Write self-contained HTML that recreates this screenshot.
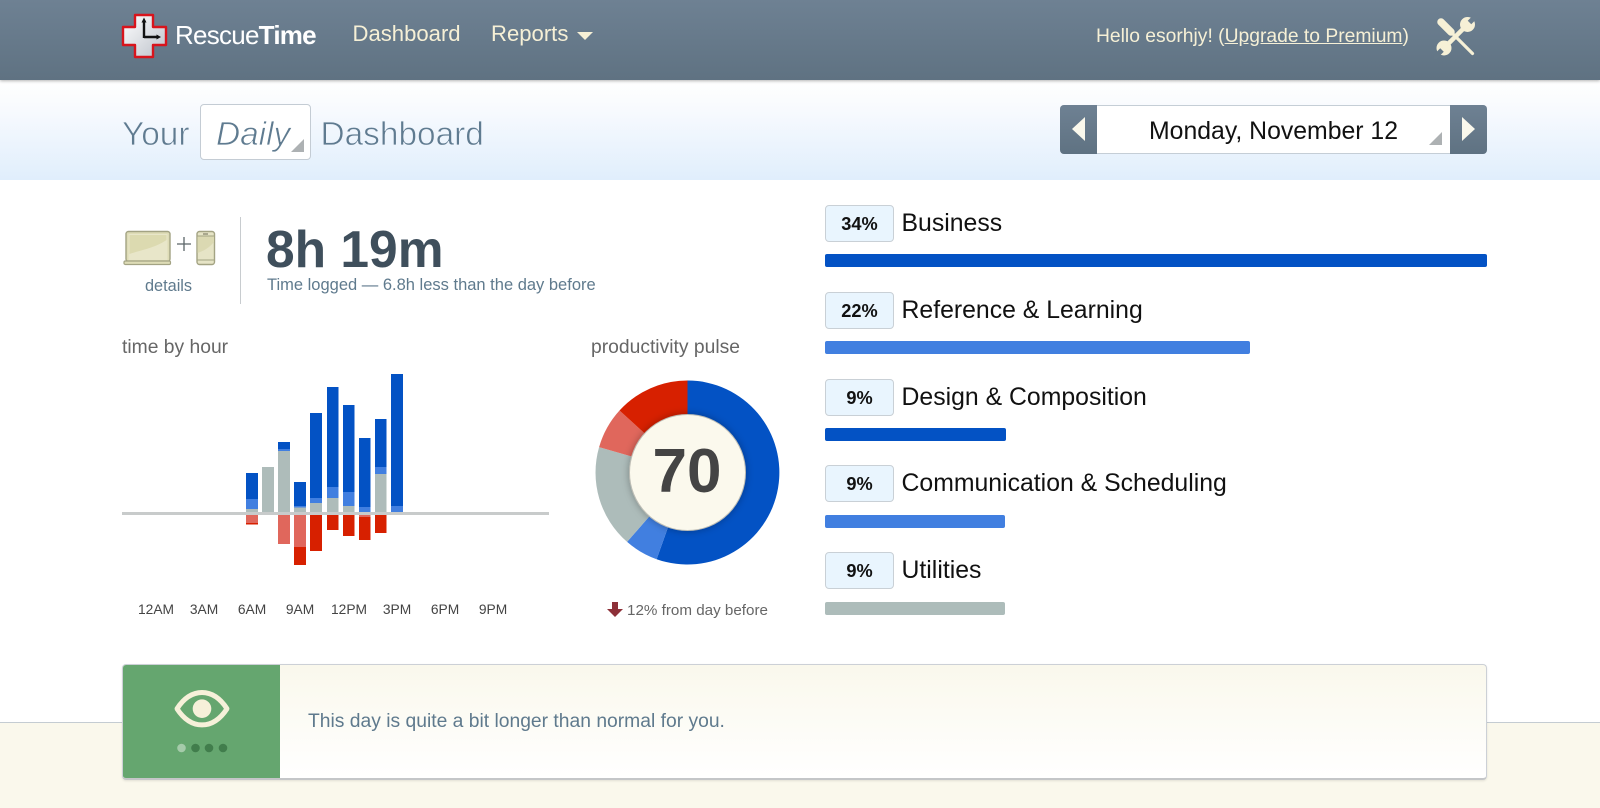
<!DOCTYPE html>
<html><head><meta charset="utf-8"><title>RescueTime Dashboard</title>
<style>
html,body{margin:0;padding:0}
body{width:1600px;height:808px;position:relative;overflow:hidden;background:#faf8ec;font-family:"Liberation Sans",sans-serif}
.a{position:absolute;white-space:nowrap}
.hdr{left:0;top:0;width:1600px;height:80px;background:linear-gradient(#6e8193,#5f7282);box-shadow:0 1px 3px rgba(0,0,0,.3);z-index:3}
.sub{left:0;top:80px;width:1600px;height:100px;background:linear-gradient(#fff 0,#f9fbfe 25%,#e0eefc 100%)}
.main{left:0;top:180px;width:1600px;height:542px;background:#fff;border-bottom:1px solid #c4ccd2}
.nav{color:#f6f0d6;font-size:22.1px;line-height:26px;top:21px}
.h1{font-size:33.4px;line-height:40px;top:115px;color:#5f7b90;-webkit-text-stroke:.7px #eff5fd}
.pct{left:825px;width:67px;height:35px;background:#e9f5fe;border:1px solid #c9d0d6;border-radius:4px;text-align:center;font-weight:bold;font-size:18.2px;line-height:36.5px;color:#111}
.cat{left:901.5px;font-size:24.8px;line-height:30px;color:#111}
.bar{left:825px;height:13px;border-radius:2px}
.hr{top:601px;font-size:13.8px;line-height:18px;color:#444;transform:translateX(-50%)}
</style></head><body>
<div class="a main"></div>
<div class="a sub"></div>
<div class="a hdr"></div>

<div class="a" style="left:0;top:0;z-index:4;width:1600px;height:80px">
<svg class="a" style="left:120px;top:12px" width="50" height="48" viewBox="0 0 50 48">
<defs><linearGradient id="lg" x1="0" y1="0" x2="1" y2="1"><stop offset="0" stop-color="#fff"/><stop offset="1" stop-color="#bcc1ca"/></linearGradient></defs>
<path d="M15 3H33V15H46V33H33V45H15V33H3V15H15Z" fill="url(#lg)" stroke="#d8141c" stroke-width="2.400" stroke-linejoin="round"/>
<path d="M24 9V26M24 25H38" stroke="#111" stroke-width="2.400" fill="none"/>
<path d="M24 5.500l-2.500 5h5zM41 25l-4.500-2.500v5z" fill="#111"/>
</svg>
<div class="a" style="left:175px;top:20px;font-size:26px;line-height:30px;letter-spacing:-.75px;color:#fff">Rescue<b>Time</b></div>
<div class="a nav" style="left:352.500px">Dashboard</div>
<div class="a nav" style="left:491px">Reports</div>
<div class="a" style="left:577px;top:32px;width:0;height:0;border-left:8px solid transparent;border-right:8px solid transparent;border-top:8px solid #f6f0d6"></div>
<div class="a" style="left:1096px;top:25.500px;font-size:19.300px;line-height:22px;color:#f6f0d6">Hello esorhjy! (<u>Upgrade to Premium</u>)</div>
<svg class="a" style="left:1434px;top:15px" width="44" height="44" viewBox="0 0 44 44">
<path d="M7 7L17 17" stroke="#f6f0d6" stroke-width="7.500" stroke-linecap="round"/>
<path d="M17 17L38.500 38.500" stroke="#f6f0d6" stroke-width="3.200" stroke-linecap="round"/>
<path d="M10 33L34 9" stroke="#f6f0d6" stroke-width="4.500"/>
<circle cx="33.500" cy="9.500" r="7.500" fill="#f6f0d6"/><circle cx="10" cy="33" r="7.500" fill="#f6f0d6"/>
<path d="M35.500 7.500L44 -1" stroke="#6b7e8f" stroke-width="5"/>
<path d="M8 35L-1 44" stroke="#647787" stroke-width="5"/>
</svg>
</div>

<div class="a h1" style="left:122px">Your</div>
<div class="a" style="left:200px;top:104px;width:109px;height:54px;background:#fff;border:1px solid #c4ccd4;border-radius:4px"></div>
<div class="a h1" style="left:216px;font-style:italic;-webkit-text-stroke-color:#fff">Daily</div>
<div class="a" style="left:291px;top:139px;width:0;height:0;border-left:13px solid transparent;border-bottom:13px solid #adb1b3"></div>
<div class="a h1" style="left:320.500px">Dashboard</div>

<div class="a" style="left:1060px;top:105px;width:427px;height:47px;background:#fff;border-radius:4px;border-top:1px solid #c5ced6;border-bottom:1px solid #c5ced6"></div>
<div class="a" style="left:1060px;top:105px;width:37px;height:49px;background:linear-gradient(#6e8193,#5f7282);border-radius:4px 0 0 4px"></div>
<div class="a" style="left:1450px;top:105px;width:37px;height:49px;background:linear-gradient(#6e8193,#5f7282);border-radius:0 4px 4px 0"></div>
<div class="a" style="left:1072px;top:117px;width:0;height:0;border-top:12.500px solid transparent;border-bottom:12.500px solid transparent;border-right:13px solid #faf8ec"></div>
<div class="a" style="left:1462px;top:117px;width:0;height:0;border-top:12.500px solid transparent;border-bottom:12.500px solid transparent;border-left:13px solid #faf8ec"></div>
<div class="a" style="left:1149px;top:116.500px;font-size:24.800px;line-height:30px;color:#111">Monday, November 12</div>
<div class="a" style="left:1429px;top:132px;width:0;height:0;border-left:13px solid transparent;border-bottom:13px solid #adb1b3"></div>

<svg class="a" style="left:122.500px;top:228px" width="96" height="40" viewBox="0 0 96 40">
<rect x="3" y="3.500" width="44" height="30" rx="2.500" fill="#dedcb6" stroke="#a3a383" stroke-width="1.400"/>
<rect x="5.500" y="6" width="39" height="26" fill="#e8e6c9"/>
<path d="M6.500 7H43.500V12C32 20 18 22 6.500 26Z" fill="#dcdab0"/>
<rect x="1" y="33" width="46.500" height="3.500" rx="1.300" fill="#dedcb6" stroke="#a3a383" stroke-width="1.200"/>
<rect x="74" y="3.500" width="17.500" height="33" rx="2.500" fill="#e6e4c6" stroke="#a3a383" stroke-width="1.400"/>
<path d="M74.500 8H91V14C85 21 80 23 74.500 25Z" fill="#dbd9b2"/>
<path d="M74.500 8H91M74.500 32H91" stroke="#a3a383" stroke-width="1"/>
<path d="M80 6H85" stroke="#6d6d55" stroke-width="1"/>
<path d="M54 16H68M61 9V23" stroke="#5b6568" stroke-width="1.300"/>
</svg>
<div class="a" style="left:145px;top:276.500px;font-size:16.300px;line-height:18px;color:#5f7a8d">details</div>
<div class="a" style="left:240px;top:217px;width:1px;height:87px;background:#c8cccf"></div>
<div class="a" style="left:266px;top:219px;font-size:51.500px;line-height:60px;font-weight:bold;color:#3f4f5c">8h 19m</div>
<div class="a" style="left:267px;top:275.500px;font-size:16.500px;line-height:18px;color:#5f7a8d">Time logged — 6.8h less than the day before</div>

<div class="a" style="left:122px;top:337px;font-size:19.300px;line-height:22px;color:#666">time by hour</div>
<div class="a" style="left:591px;top:337px;font-size:19.300px;line-height:22px;color:#666">productivity pulse</div>

<svg class="a" style="left:0;top:360px" width="560" height="220" viewBox="0 360 560 220">
<g fill="#0352c4">
<rect x="246" y="473" width="12" height="26"/><rect x="278" y="442" width="12" height="7"/><rect x="294" y="482" width="12" height="24"/><rect x="310" y="413" width="12" height="85"/><rect x="327" y="387" width="11.500" height="100"/><rect x="343" y="405" width="11.500" height="87"/><rect x="359" y="438" width="11.500" height="69"/><rect x="375" y="419" width="11.500" height="48"/><rect x="391" y="374" width="12" height="132"/>
</g>
<g fill="#417fe0">
<rect x="246" y="499" width="12" height="10"/><rect x="278" y="449" width="12" height="2"/><rect x="294" y="506" width="12" height="1.500"/><rect x="310" y="498" width="12" height="5"/><rect x="327" y="487" width="11.500" height="11"/><rect x="343" y="492" width="11.500" height="14"/><rect x="359" y="507" width="11.500" height="5"/><rect x="375" y="467" width="11.500" height="7"/><rect x="391" y="506" width="12" height="6"/>
</g>
<g fill="#aebcba">
<rect x="246" y="509" width="12" height="3"/><rect x="262" y="467" width="12" height="45"/><rect x="278" y="451" width="12" height="61"/><rect x="294" y="507.500" width="12" height="4.500"/><rect x="310" y="503" width="12" height="9"/><rect x="327" y="498" width="11.500" height="14"/><rect x="343" y="506" width="11.500" height="6"/><rect x="375" y="474" width="11.500" height="38"/>
</g>
<g fill="#e0675c">
<rect x="246" y="515" width="12" height="8"/><rect x="278" y="515" width="12" height="29"/><rect x="294" y="515" width="12" height="32"/><rect x="359" y="515" width="11.500" height="2"/>
</g>
<g fill="#d72000">
<rect x="246" y="523" width="12" height="1.500"/><rect x="294" y="547" width="12" height="18"/><rect x="310" y="515" width="12" height="36"/><rect x="327" y="515" width="11.500" height="15"/><rect x="343" y="515" width="11.500" height="21"/><rect x="359" y="517" width="11.500" height="23"/><rect x="375" y="515" width="11.500" height="18"/>
</g>
<rect x="122" y="512" width="427" height="3" fill="#c8cbcb"/>
</svg>
<div class="a hr" style="left:156px">12AM</div>
<div class="a hr" style="left:204px">3AM</div>
<div class="a hr" style="left:252px">6AM</div>
<div class="a hr" style="left:300px">9AM</div>
<div class="a hr" style="left:349px">12PM</div>
<div class="a hr" style="left:397px">3PM</div>
<div class="a hr" style="left:445px">6PM</div>
<div class="a hr" style="left:493px">9PM</div>

<svg class="a" style="left:590px;top:375px" width="195" height="195" viewBox="-97.500 -97.500 195 195">
<defs><filter id="sh" x="-30%" y="-30%" width="160%" height="160%"><feDropShadow dx="0" dy="0" stdDeviation="4" flood-color="#000" flood-opacity=".3"/></filter></defs>
<path d="M0 0L0 -92A92 92 0 1 1 -30.900 86.700Z" fill="#0352c4"/>
<path d="M0 0L-30.900 86.700A92 92 0 0 1 -60.400 69.400Z" fill="#417fe0"/>
<path d="M0 0L-60.400 69.400A92 92 0 0 1 -88.400 -25.400Z" fill="#adbcba"/>
<path d="M0 0L-88.400 -25.400A92 92 0 0 1 -68 -62Z" fill="#e0675c"/>
<path d="M0 0L-68 -62A92 92 0 0 1 0 -92Z" fill="#d72000"/>
<circle cx="0" cy="0" r="58" fill="#fbf9ed" stroke="#bdbdb5" stroke-width="1" filter="url(#sh)"/>
</svg>
<div class="a" style="left:607px;top:436px;width:160px;text-align:center;font-size:62px;line-height:72px;font-weight:bold;color:#444">70</div>
<svg class="a" style="left:607px;top:602px" width="17" height="16" viewBox="0 0 17 16"><path d="M5 0H11V7H16L8 15L0 7H5Z" fill="#8d3038"/></svg>
<div class="a" style="left:627px;top:601.500px;font-size:15.200px;line-height:18px;color:#666">12% from day before</div>

<div class="a pct" style="top:205px">34%</div><div class="a cat" style="top:209px">Business</div>
<div class="a bar" style="top:254px;width:662px;background:#0352c4"></div>
<div class="a pct" style="top:292px">22%</div><div class="a cat" style="top:296px">Reference &amp; Learning</div>
<div class="a bar" style="top:341px;width:425px;background:#417fe0"></div>
<div class="a pct" style="top:379px">9%</div><div class="a cat" style="top:383px">Design &amp; Composition</div>
<div class="a bar" style="top:428px;width:181px;background:#0352c4"></div>
<div class="a pct" style="top:465px">9%</div><div class="a cat" style="top:469px">Communication &amp; Scheduling</div>
<div class="a bar" style="top:515px;width:180px;background:#417fe0"></div>
<div class="a pct" style="top:552px">9%</div><div class="a cat" style="top:556px">Utilities</div>
<div class="a bar" style="top:602px;width:180px;background:#adbcba"></div>

<div class="a" style="left:122px;top:664px;width:1363px;height:113px;border:1px solid #ccd0d6;border-bottom:2px solid #c4c6c8;border-radius:4px;background:linear-gradient(#faf8ec,#fff);overflow:hidden;box-shadow:0 1px 2px rgba(0,0,0,.1)">
<div class="a" style="left:0;top:0;width:157px;height:113px;background:#65a66f"></div>
<svg class="a" style="left:50px;top:22px" width="60" height="42" viewBox="0 0 60 42">
<path d="M4 21.700C11 11 19 5.500 29 5.500S47 11 54 21.700C47 32.400 39 37.900 29 37.900S11 32.400 4 21.700Z" fill="none" stroke="#f6f0d9" stroke-width="5" stroke-linejoin="round"/>
<circle cx="29" cy="21.700" r="9.300" fill="#f6f0d9"/>
</svg>
<svg class="a" style="left:50px;top:72px" width="60" height="20" viewBox="0 0 60 20">
<circle cx="8.500" cy="11" r="4.300" fill="#a5cbaa"/><circle cx="22.500" cy="11" r="4.300" fill="#417d4c"/><circle cx="36" cy="11" r="4.300" fill="#417d4c"/><circle cx="50" cy="11" r="4.300" fill="#417d4c"/>
</svg>
</div>
<div class="a" style="left:308px;top:711px;font-size:19.300px;line-height:22px;color:#5f7a8d">This day is quite a bit longer than normal for you.</div>
</body></html>
